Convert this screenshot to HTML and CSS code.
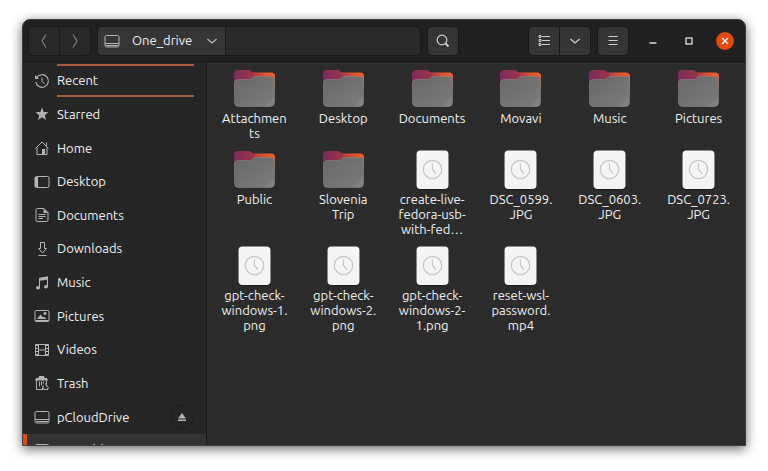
FILE: index.html
```html
<!DOCTYPE html>
<html lang="en">

<head>
    <meta charset="UTF-8">
    <meta name="viewport" content="width=device-width, initial-scale=1">
    <title>One_drive</title>
    <link rel="stylesheet" href="styles.css">
</head>

<body>

    <!-- shared icons -->
    <svg class="defs" width="0" height="0" aria-hidden="true">
        <defs>
            <linearGradient id="tab" x1="0" y1="0.4" x2="1" y2="0">
                <stop offset="0" stop-color="#7d2a5c"></stop>
                <stop offset="0.5" stop-color="#b53a45"></stop>
                <stop offset="0.75" stop-color="#e1532c"></stop>
                <stop offset="1" stop-color="#f0642a"></stop>
            </linearGradient>
            <linearGradient id="front" x1="0" y1="0" x2="1" y2="1">
                <stop offset="0" stop-color="#686868"></stop>
                <stop offset="1" stop-color="#7c7c7c"></stop>
            </linearGradient>
            <linearGradient id="flap" x1="0" y1="0" x2="1" y2="0">
                <stop offset="0" stop-color="#7d2a5c"></stop>
                <stop offset="1" stop-color="#9c3648"></stop>
            </linearGradient>
        </defs>
        <symbol id="folder" viewBox="0 0 41 40">
            <path fill="url(#tab)" d="M3 3.500h34a4 4 0 0 1 4 4v12H0V7a4 4 0 0 1 3-3.500z"></path>
            <path fill="url(#flap)" d="M4 1h11c2 0 3 3 5 3v4l-3 4H0V5a4 4 0 0 1 4-4z"></path>
            <path fill="url(#front)" stroke="#858585" stroke-opacity=".6" d="M4 10.500h12c2 0 3-3 5-3h16a3.500 3.500 0 0 1 3.500 3.500v22.500a4 4 0 0 1-4 4h-32a4 4 0 0 1-4-4V14a3.500 3.500 0 0 1 3.500-3.500z"></path>
            <path fill="#888" fill-opacity=".55" d="M40 28v5.500a4 4 0 0 1-4 4h-6z"></path>
        </symbol>
        <symbol id="file" viewBox="0 0 41 40">
            <rect x="4" y="1.500" width="33" height="38.500" rx="4" fill="#1c1c1c"></rect>
            <rect x="4.500" y="0.500" width="32" height="38.500" rx="4" fill="#f4f4f4"></rect>
            <circle cx="20.500" cy="19.500" r="9.200" fill="none" stroke="#c6c6c6" stroke-width="1.200"></circle>
            <path d="M20.500 13.500v6l3.500 4" fill="none" stroke="#c6c6c6" stroke-width="1.200"></path>
        </symbol>
        <symbol id="drive" viewBox="0 0 16 16">
            <rect x="1" y="2.500" width="14" height="11.500" rx="1.500" fill="none" stroke="currentColor"></rect>
            <path d="M1 10.500h14M2 12.500h12" stroke="currentColor" fill="none"></path>
        </symbol>
        <symbol id="down" viewBox="0 0 16 16">
            <path d="M3.500 6L8 10l4.500-4" fill="none" stroke="currentColor" stroke-width="1.300"></path>
        </symbol>
    </svg>

    <div class="window">
        <header class="titlebar">
            <div class="group">
                <button class="btn dim" aria-label="Back"><svg class="icon" viewBox="0 0 16 16"><path d="M10 1.500L6 8l4 6.500" fill="none" stroke="#808080" stroke-width="1.200"></path></svg></button>
                <button class="btn dim" aria-label="Forward"><svg class="icon" viewBox="0 0 16 16"><path d="M6 1.500L10 8l-4 6.500" fill="none" stroke="#808080" stroke-width="1.200"></path></svg></button>
            </div>
            <div class="pathbar">
                <button class="path">
                    <svg class="icon"><use href="#drive"></use></svg>
                    <span>One_drive</span>
                    <svg class="icon"><use href="#down"></use></svg>
                </button>
            </div>
            <div class="group search">
                <button class="btn" aria-label="Search"><svg class="icon" viewBox="0 0 16 16"><circle cx="7" cy="7" r="4.800" fill="none" stroke="currentColor" stroke-width="1.200"></circle><path d="M10.500 10.500l3 3" stroke="currentColor" stroke-width="1.800"></path></svg></button>
            </div>
            <div class="group">
                <button class="btn" aria-label="List view"><svg class="icon" viewBox="0 0 16 16"><path d="M6 3.500h8M6 7.500h8M6 11.500h8" stroke="currentColor"></path><path d="M3 2.500h2v2H3zM3 6.500h2v2H3zM3 10.500h2v2H3z" fill="none" stroke="currentColor"></path></svg></button>
                <button class="btn" aria-label="View options"><svg class="icon"><use href="#down"></use></svg></button>
            </div>
            <div class="group">
                <button class="btn" aria-label="Menu"><svg class="icon" viewBox="0 0 16 16"><path d="M3.500 3.500h9M3.500 7.500h9M3.500 11.500h9" stroke="currentColor" stroke-width="1.200"></path></svg></button>
            </div>
            <div class="controls">
                <button aria-label="Minimize"><svg class="icon" viewBox="0 0 16 16"><path d="M4.500 10h7" stroke="#ddd" stroke-width="1.300"></path></svg></button>
                <button aria-label="Maximize"><svg class="icon" viewBox="0 0 16 16"><rect x="5" y="5" width="6" height="6" fill="none" stroke="#eee" stroke-width="1.200"></rect></svg></button>
                <button class="close" aria-label="Close"><svg class="icon" viewBox="0 0 16 16"><path d="M5 5l6 6M11 5l-6 6" stroke="#fff" stroke-width="1.300"></path></svg></button>
            </div>
        </header>

        <div class="main">
            <nav class="sidebar">
                <div class="place recent">
                    <svg class="icon" viewBox="0 0 16 16"><path d="M2.800 4.500A6.300 6.300 0 1 1 1.800 9" fill="none" stroke="currentColor" stroke-width="1.200"></path><path d="M1 2v4h4z" fill="currentColor"></path><path d="M8 4.500V8.500l2.500 2" fill="none" stroke="currentColor"></path></svg>
                    <a href="#">Recent</a>
                </div>
                <div class="place">
                    <svg class="icon" viewBox="0 0 16 16"><path d="M8 1.500l1.700 4.500 4.800.2-3.800 3 1.300 4.700L8 11.200l-4 2.700 1.300-4.700-3.800-3 4.800-.2z" fill="currentColor"></path></svg>
                    <a href="#">Starred</a>
                </div>
                <div class="place">
                    <svg class="icon" viewBox="0 0 16 16"><path d="M1.500 8.500L8 2l6.500 6.500M3 7.500v7h10v-7M12.500 6.500v-4" fill="none" stroke="currentColor"></path><path d="M8 9h3v5.500H8z" fill="currentColor"></path></svg>
                    <a href="#">Home</a>
                </div>
                <div class="place">
                    <svg class="icon" viewBox="0 0 16 16"><rect x="1" y="2.500" width="14" height="11" rx="1.500" fill="none" stroke="currentColor"></rect><path d="M1 3h3v10H1z" fill="currentColor"></path></svg>
                    <a href="#">Desktop</a>
                </div>
                <div class="place">
                    <svg class="icon" viewBox="0 0 16 16"><path d="M3.500 1.500H10l4 4v7.500a1.500 1.500 0 0 1-1.500 1.500h-9A1.500 1.500 0 0 1 2 13V3a1.500 1.500 0 0 1 1.500-1.500z" fill="none" stroke="currentColor"></path><path d="M9.500 1.500v4.500h4.500z" fill="currentColor"></path><path d="M4.500 7.500h7M4.500 9.500h7M4.500 11.500h4.500" stroke="currentColor"></path></svg>
                    <a href="#">Documents</a>
                </div>
                <div class="place">
                    <svg class="icon" viewBox="0 0 16 16"><path d="M6.500 1.500h4v6h2L8.500 12l-4-4.500h2zM4.500 14.500h8" fill="none" stroke="currentColor"></path></svg>
                    <a href="#">Downloads</a>
                </div>
                <div class="place">
                    <svg class="icon" viewBox="0 0 16 16"><path d="M5.500 12.500v-9L13.500 2v9.500" fill="none" stroke="currentColor"></path><path d="M5 3l9-1.500v3L5 6z" fill="currentColor"></path><ellipse cx="4" cy="12.800" rx="2" ry="1.800" fill="currentColor"></ellipse><ellipse cx="12" cy="11.800" rx="2" ry="1.800" fill="currentColor"></ellipse></svg>
                    <a href="#">Music</a>
                </div>
                <div class="place">
                    <svg class="icon" viewBox="0 0 16 16"><rect x="1" y="2.500" width="14" height="11" rx="1.500" fill="none" stroke="currentColor"></rect><path d="M3 11l3.500-4.500L9 9.500l1-1 2.500 2.500zM1.500 12h13v1.500h-13z" fill="currentColor"></path><circle cx="11" cy="5.500" r="1.400" fill="currentColor"></circle></svg>
                    <a href="#">Pictures</a>
                </div>
                <div class="place">
                    <svg class="icon" viewBox="0 0 16 16"><path d="M1.500 2.500h13v11h-13zM4.500 2.500v11M11.500 2.500v11M4.500 8h7" fill="none" stroke="currentColor"></path><path d="M3 3v10M13 3v10" stroke="currentColor" stroke-dasharray="1 2" stroke-width="2"></path></svg>
                    <a href="#">Videos</a>
                </div>
                <div class="place">
                    <svg class="icon" viewBox="0 0 16 16"><path d="M5 1h5l.5 2H13l1 2.500H1L2 3h2.500z" fill="currentColor"></path><path d="M2.500 5v9.500H9M12.500 5v4" fill="none" stroke="currentColor"></path><path d="M5.500 6.500v5M7.500 6.500v4M9.500 6.500v2" stroke="currentColor"></path><path d="M11.500 8.500l2 3.500M9.500 10.500l-1 3 2 1h3l1-2" fill="none" stroke="currentColor" stroke-width="1.200"></path></svg>
                    <a href="#">Trash</a>
                </div>
                <div class="place">
                    <svg class="icon"><use href="#drive"></use></svg>
                    <a href="#">pCloudDrive</a>
                    <button class="eject" aria-label="Eject"><svg class="icon" viewBox="0 0 16 16"><path d="M8 4l4 5.500H4zM4 10.500h8V12H4z" fill="currentColor"></path></svg></button>
                </div>
                <div class="place active">
                    <svg class="icon"><use href="#drive"></use></svg>
                    <a href="#">One_drive</a>
                </div>
            </nav>

            <main class="files">
                <a class="item" href="#"><svg><use href="#folder"></use></svg>Attachmen<br>ts</a>
                <a class="item" href="#"><svg><use href="#folder"></use></svg>Desktop</a>
                <a class="item" href="#"><svg><use href="#folder"></use></svg>Documents</a>
                <a class="item" href="#"><svg><use href="#folder"></use></svg>Movavi</a>
                <a class="item" href="#"><svg><use href="#folder"></use></svg>Music</a>
                <a class="item" href="#"><svg><use href="#folder"></use></svg>Pictures</a>

                <a class="item" href="#"><svg><use href="#folder"></use></svg>Public</a>
                <a class="item" href="#"><svg><use href="#folder"></use></svg>Slovenia<br>Trip</a>
                <a class="item" href="#"><svg><use href="#file"></use></svg>create-live-<br>fedora-usb-<br>with-fed…</a>
                <a class="item" href="#"><svg><use href="#file"></use></svg>DSC_0599.<br>JPG</a>
                <a class="item" href="#"><svg><use href="#file"></use></svg>DSC_0603.<br>JPG</a>
                <a class="item" href="#"><svg><use href="#file"></use></svg>DSC_0723.<br>JPG</a>

                <a class="item" href="#"><svg><use href="#file"></use></svg>gpt-check-<br>windows-1.<br>png</a>
                <a class="item" href="#"><svg><use href="#file"></use></svg>gpt-check-<br>windows-2.<br>png</a>
                <a class="item" href="#"><svg><use href="#file"></use></svg>gpt-check-<br>windows-2-<br>1.png</a>
                <a class="item" href="#"><svg><use href="#file"></use></svg>reset-wsl-<br>password.<br>mp4</a>
            </main>
        </div>
    </div>

</body>

</html>
```
FILE: styles.css
```css
* {
    box-sizing: border-box;
}
body {
    margin: 0;
    height: 100vh;
    padding: 19px 22px 25px;
    background: #fff;
    color: #f0f0f0;
    font: 13px/15px Ubuntu, "Noto Sans", sans-serif;
}
a {
    color: inherit;
    text-decoration: none;
}
button {
    padding: 0;
    border: none;
    background: none;
    color: #d0d0d0;
    font: inherit;
    display: flex;
    align-items: center;
    justify-content: center;
}
.defs {
    position: absolute;
}
.icon {
    width: 16px;
    height: 16px;
    flex: none;
}
.window {
    height: 100%;
    display: flex;
    flex-direction: column;
    overflow: hidden;
    border: 1px solid #3c3f3c;
    border-radius: 8px 8px 0 0;
    background: #2c2c2c;
    box-shadow: 0 3px 12px rgba(0, 0, 0, 0.6);
}

/* title bar */
.titlebar {
    display: flex;
    align-items: center;
    gap: 6px;
    height: 42px;
    flex: none;
    padding: 0 11px 0 5px;
    background: #212121;
    border-bottom: 1px solid #161616;
}
.group {
    display: flex;
    gap: 1px;
    border: 1px solid #191919;
    border-radius: 5px;
    background: #191919;
    overflow: hidden;
}
.btn {
    width: 30px;
    height: 28px;
    background: #353535;
}
.dim {
    background: #292929;
}
.pathbar {
    flex: 1;
    display: flex;
    border: 1px solid #191919;
    border-radius: 5px;
    background: #2b2b2b;
    overflow: hidden;
}
.path {
    height: 28px;
    padding: 0 5px 0 6px;
    gap: 12px;
    background: #363636;
    border-right: 1px solid #1d1d1d;
    color: #f0f0f0;
}
.path .icon {
    color: #b8b8b8;
}
.search {
    margin-right: 63px;
}
.controls {
    display: flex;
    align-items: center;
    gap: 18px;
    margin-left: 9px;
}
.controls button {
    width: 18px;
    height: 18px;
    border-radius: 50%;
}
.controls .close {
    background: #e24912;
}

/* sidebar */
.main {
    flex: 1;
    min-height: 0;
    display: flex;
}
.sidebar {
    width: 184px;
    flex: none;
    display: flex;
    flex-direction: column;
    padding-top: 2px;
    background: #262626;
    border-right: 1px solid #1a1a1a;
    overflow: hidden;
}
.place {
    flex: 3 1 0;
    min-height: 0;
    display: flex;
    align-items: center;
    gap: 7px;
    padding: 0 12px 0 11px;
}
.place .icon {
    color: #b4b4b4;
}
.place a {
    flex: 1;
}
.recent a {
    padding: 7px 0;
    border-top: 2px solid #a65c42;
    border-bottom: 2px solid #a65c42;
}
/* the last place is cut off by the window edge */
.active {
    flex-grow: 1;
    align-items: flex-start;
    padding-left: 7px;
    border-left: 4px solid #e24912;
    background: #333;
    overflow: hidden;
}
.active .icon,
.active a {
    margin-top: 8px;
}
.eject {
    width: 24px;
    height: 24px;
    border: 1px solid #1f1f1f;
    border-radius: 50%;
}

/* files */
.files {
    flex: 1;
    display: grid;
    grid-template-columns: repeat(6, 1fr);
    align-content: start;
    row-gap: 9px;
    padding: 7px 2px 0 3px;
}
.item {
    text-align: center;
}
.item svg {
    display: block;
    width: 41px;
    height: 40px;
    margin: 0 auto 2px;
}
```
